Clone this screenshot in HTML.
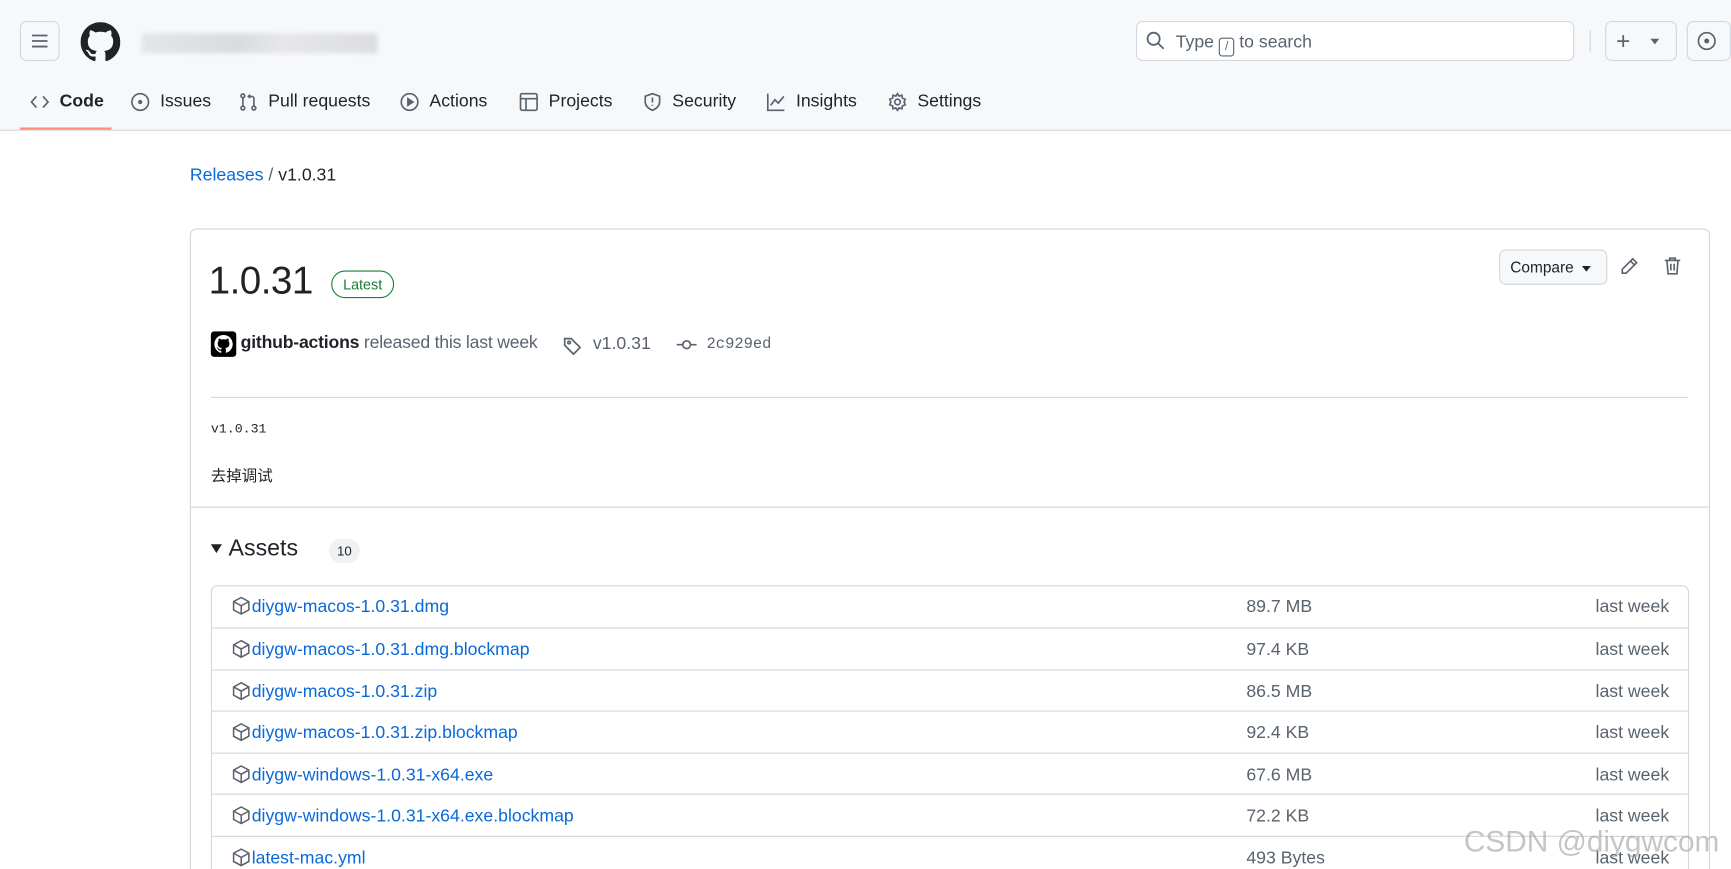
<!DOCTYPE html>
<html><head><meta charset="utf-8"><style>
*{box-sizing:border-box;margin:0;padding:0}
html,body{width:1731px;height:869px;overflow:hidden;background:#fff}
#o{position:relative;width:1731px;height:869px;overflow:hidden}
#w{position:absolute;left:0;top:0;width:1568px;height:784px;overflow:hidden;transform:scale(1.10395,1.10842);transform-origin:0 0;font-family:"Liberation Sans","Noto Sans CJK SC",sans-serif;color:#1f2328}
.a{position:absolute}
.hdr{left:0;top:0;width:1568px;height:118px;background:#f6f8fa;border-bottom:1px solid #d0d7de}
.btn{border:1px solid #d0d7de;border-radius:6px;background:#f6f8fa}
.tab{top:83px;font-size:16px;display:flex;align-items:center;gap:9px;color:#1f2328}
.tab svg{width:18px;height:18px;fill:none;stroke:#59636e;stroke-width:1.5}
.link{color:#0969da}
.row{left:0;width:1338px;height:38px;border-top:1px solid #d0d7de;font-size:16px}
.row .n{position:absolute;left:18px;top:11px;color:#0969da;display:flex;align-items:center}
.row .s{position:absolute;left:937px;top:11px;color:#59636e}
.row .d{position:absolute;right:18px;top:11px;color:#59636e}
.pkg{width:17px;height:17px;fill:none;stroke:#59636e;stroke-width:1.3;margin-right:1px;margin-top:-4px}
</style></head><body><div id="o"><div id="w">
<div class="a hdr"></div>
<div class="a btn" style="left:18px;top:19px;width:36px;height:36px"></div>
<svg class="a" style="left:27px;top:29px" width="18" height="16"><path d="M2 3h14M2 8h14M2 13h14" stroke="#59636e" stroke-width="1.6"/></svg>
<svg class="a" style="left:73px;top:20px" width="36" height="36" viewBox="0 0 16 16"><path fill="#1f2328" d="M8 0C3.58 0 0 3.58 0 8c0 3.54 2.290 6.53 5.47 7.59.4.07.55-.17.55-.38 0-.19-.01-.82-.01-1.49-2.01.37-2.53-.49-2.69-.94-.09-.23-.48-.94-.82-1.13-.28-.15-.68-.52-.01-.53.63-.01 1.08.58 1.23.82.72 1.21 1.87.87 2.33.66.07-.52.28-.87.51-1.07-1.78-.2-3.64-.89-3.64-3.95 0-.87.31-1.59.82-2.15-.08-.2-.36-1.02.08-2.12 0 0 .67-.21 2.2.82.64-.18 1.32-.27 2-.27.68 0 1.36.09 2 .27 1.53-1.04 2.2-.82 2.2-.82.44 1.1.16 1.92.08 2.12.51.56.82 1.27.82 2.15 0 3.07-1.87 3.75-3.65 3.95.29.25.54.73.54 1.48 0 1.07-.01 1.93-.01 2.2 0 .21.15.46.55.38A8.013 8.013 0 0016 8c0-4.42-3.58-8-8-8z"/></svg>
<div class="a" style="left:128px;top:30px;width:214px;height:18px;background:linear-gradient(90deg,#e4e6e9,#d9dbde 40%,#e6e7e9 60%,#dcdde0);filter:blur(2px)"></div>
<div class="a btn" style="left:1029px;top:19px;width:397px;height:36px;background:#fff"></div>
<svg class="a" style="left:1038px;top:28px" width="18" height="18" fill="none" stroke="#59636e" stroke-width="1.6"><circle cx="7" cy="7" r="5.5"/><path d="M11 11l5 5"/></svg>
<div class="a" style="left:1065px;top:30px;font-size:16px;color:#59636e">Type <span style="display:inline-block;border:1px solid #59636e;border-radius:3px;font-size:11px;width:14px;height:17px;text-align:center;line-height:15px;vertical-align:-2px">/</span> to search</div>
<div class="a" style="left:1440px;top:27px;width:1px;height:20px;background:#d0d7de"></div>
<div class="a btn" style="left:1454px;top:19px;width:65px;height:36px"></div>
<div class="a" style="left:1464px;top:24px;font-size:22px;color:#59636e">+</div>
<div class="a" style="left:1495px;top:35px;border:4px solid transparent;border-top:5px solid #59636e"></div>
<div class="a btn" style="left:1528px;top:19px;width:40px;height:36px"></div>
<svg class="a" style="left:1537px;top:28px" width="18" height="18" fill="none" stroke="#59636e" stroke-width="1.5"><circle cx="9" cy="9" r="7.5"/><circle cx="9" cy="9" r="1.5" fill="#59636e"/></svg>

<div class="a tab" style="left:27px"><svg viewBox="0 0 18 18"><path d="M6 4L1.5 9 6 14M12 4l4.5 5L12 14"/></svg><b style="font-weight:600">Code</b></div>
<div class="a" style="left:18px;top:115px;width:83px;height:2px;background:#fd8c73"></div>
<div class="a tab" style="left:118px"><svg viewBox="0 0 18 18"><circle cx="9" cy="9" r="7.5"/><circle cx="9" cy="9" r="1.2" fill="#59636e"/></svg>Issues</div>
<div class="a tab" style="left:216px"><svg viewBox="0 0 18 18"><circle cx="4" cy="3.5" r="1.7"/><circle cx="4" cy="14.5" r="1.7"/><circle cx="14" cy="14.5" r="1.7"/><path d="M4 5.2v7.6M14 12.8V6a2 2 0 00-2-2H9M10.5 2.5L9 4l1.5 1.5"/></svg>Pull requests</div>
<div class="a tab" style="left:362px"><svg viewBox="0 0 18 18"><circle cx="9" cy="9" r="7.5"/><path d="M7.5 6v6l4.5-3z" fill="#59636e"/></svg>Actions</div>
<div class="a tab" style="left:470px"><svg viewBox="0 0 18 18"><rect x="1.5" y="1.5" width="15" height="15" rx="1.5"/><path d="M1.5 6h15M6.5 6v10.5"/></svg>Projects</div>
<div class="a tab" style="left:582px"><svg viewBox="0 0 18 18"><path d="M9 1.5l6.5 2.3V9c0 3.5-3 6-6.5 7.5C5.5 15 2.5 12.5 2.5 9V3.8z"/><path d="M9 5v4.5M9 11.5v1"/></svg>Security</div>
<div class="a tab" style="left:694px"><svg viewBox="0 0 18 18"><path d="M1.5 1.5v15h15M4 12l4-5 3 3 5-6"/></svg>Insights</div>
<div class="a tab" style="left:804px"><svg viewBox="0 0 18 18"><circle cx="9" cy="9" r="2.5"/><path d="M9 1.5l1.5 2.2 2.5-.8.5 2.6 2.5 1-1 2.5 1 2.5-2.5 1-.5 2.6-2.5-.8L9 16.5l-1.5-2.2-2.5.8-.5-2.6-2.5-1 1-2.5-1-2.5 2.5-1 .5-2.6 2.5.8z"/></svg>Settings</div>

<div class="a" style="left:172px;top:150px;font-size:16px"><span class="link">Releases</span> <span style="color:#59636e">/</span> v1.0.31</div>

<div class="a" style="left:172px;top:206px;width:1377px;height:800px;border:1px solid #d0d7de;border-radius:6px"></div>
<div class="a" style="left:189px;top:234px;font-size:35px;font-weight:500;letter-spacing:-0.5px">1.0.31</div>
<div class="a" style="left:300px;top:244px;width:57px;height:25px;border:1px solid #1a7f37;border-radius:13px;color:#1a7f37;font-size:13px;text-align:center;line-height:23px">Latest</div>
<div class="a btn" style="left:1358px;top:225px;width:98px;height:32px"></div>
<div class="a" style="left:1368px;top:233px;font-size:14px">Compare</div>
<div class="a" style="left:1433px;top:240px;border:4px solid transparent;border-top:5px solid #1f2328"></div>
<svg class="a" style="left:1467px;top:231px" width="18" height="18" fill="none" stroke="#59636e" stroke-width="1.5"><path d="M12 2.5l3.5 3.5L6 15.5H2.5V12z M10 4.5l3.5 3.5"/></svg>
<svg class="a" style="left:1506px;top:231px" width="18" height="18" fill="none" stroke="#59636e" stroke-width="1.5"><path d="M2 4h14M6.5 4V2h5v2M4 4l1 12h8l1-12M7.5 7v6M10.5 7v6"/></svg>

<div class="a" style="left:191px;top:299px;width:23px;height:23px;background:#000;border-radius:3px"></div>
<svg class="a" style="left:193px;top:301px" width="19" height="19" viewBox="0 0 16 16"><path fill="#fff" d="M8 1C4.1 1 1 4.1 1 8c0 3.1 2 5.7 4.8 6.6.35.06.48-.15.48-.33v-1.3c-1.95.42-2.36-.94-2.36-.94-.32-.81-.78-1.03-.78-1.03-.64-.43.05-.42.05-.42.7.05 1.07.72 1.07.72.63 1.07 1.64.76 2.04.58.06-.45.24-.76.45-.94-1.56-.18-3.2-.78-3.2-3.46 0-.77.27-1.39.72-1.88-.07-.18-.31-.89.07-1.86 0 0 .59-.19 1.93.72a6.6 6.6 0 013.5 0c1.34-.91 1.93-.72 1.93-.72.38.97.14 1.68.07 1.86.45.49.72 1.11.72 1.88 0 2.69-1.64 3.28-3.2 3.45.25.22.48.65.48 1.3v1.93c0 .19.13.4.48.33C13 13.7 15 11.1 15 8c0-3.9-3.1-7-7-7z"/></svg>
<div class="a" style="left:218px;top:301px;font-size:16px;color:#59636e;letter-spacing:-0.2px"><b style="color:#1f2328;font-weight:600">github-actions</b> released this last week</div>
<svg class="a" style="left:510px;top:303px" width="18" height="18" fill="none" stroke="#59636e" stroke-width="1.5"><path d="M1.5 2.5v6l8 8 6-6-8-8z"/><circle cx="5.5" cy="6" r="1.2"/></svg>
<div class="a" style="left:537px;top:302px;font-size:16px;color:#59636e">v1.0.31</div>
<svg class="a" style="left:612px;top:302px" width="20" height="18" fill="none" stroke="#59636e" stroke-width="1.5"><circle cx="10" cy="9" r="3.5"/><path d="M1 9h5.5M13.5 9H19"/></svg>
<div class="a" style="left:640px;top:303px;font-size:14px;color:#59636e;font-family:'Liberation Mono',monospace">2c929ed</div>
<div class="a" style="left:191px;top:358px;width:1338px;height:1px;background:#d0d7de"></div>
<div class="a" style="left:191px;top:380px;font-size:12px;font-family:'Liberation Mono',monospace;color:#1f2328">v1.0.31</div>
<div class="a" style="left:191px;top:419px;font-size:14px">去掉调试</div>
<div class="a" style="left:173px;top:457px;width:1375px;height:1px;background:#d0d7de"></div>
<div class="a" style="left:191px;top:491px;border:5px solid transparent;border-top:8px solid #1f2328;border-bottom:0"></div>
<div class="a" style="left:207px;top:483px;font-size:21px;font-weight:500">Assets</div>
<div class="a" style="left:298px;top:486px;width:28px;height:22px;border-radius:11px;background:#eff2f5;font-size:12px;text-align:center;line-height:22px">10</div>

<div class="a" style="left:191px;top:528px;width:1339px;height:500px;border:1px solid #d0d7de;border-radius:6px;overflow:hidden">
<div class="a row" style="top:-1px;border-top:0"><div class="n"><svg class="pkg" viewBox="0 0 16 16"><path d="M8 1l6.5 3.5v7L8 15l-6.5-3.5v-7zM1.5 4.5L8 8l6.5-3.5M8 8v7"/></svg>diygw-macos-1.0.31.dmg</div><div class="s">89.7 MB</div><div class="d">last week</div></div>
<div class="a row" style="top:37px"><div class="n"><svg class="pkg" viewBox="0 0 16 16"><path d="M8 1l6.5 3.5v7L8 15l-6.5-3.5v-7zM1.5 4.5L8 8l6.5-3.5M8 8v7"/></svg>diygw-macos-1.0.31.dmg.blockmap</div><div class="s">97.4 KB</div><div class="d">last week</div></div>
<div class="a row" style="top:75px"><div class="n"><svg class="pkg" viewBox="0 0 16 16"><path d="M8 1l6.5 3.5v7L8 15l-6.5-3.5v-7zM1.5 4.5L8 8l6.5-3.5M8 8v7"/></svg>diygw-macos-1.0.31.zip</div><div class="s">86.5 MB</div><div class="d">last week</div></div>
<div class="a row" style="top:112px"><div class="n"><svg class="pkg" viewBox="0 0 16 16"><path d="M8 1l6.5 3.5v7L8 15l-6.5-3.5v-7zM1.5 4.5L8 8l6.5-3.5M8 8v7"/></svg>diygw-macos-1.0.31.zip.blockmap</div><div class="s">92.4 KB</div><div class="d">last week</div></div>
<div class="a row" style="top:150px"><div class="n"><svg class="pkg" viewBox="0 0 16 16"><path d="M8 1l6.5 3.5v7L8 15l-6.5-3.5v-7zM1.5 4.5L8 8l6.5-3.5M8 8v7"/></svg>diygw-windows-1.0.31-x64.exe</div><div class="s">67.6 MB</div><div class="d">last week</div></div>
<div class="a row" style="top:187px"><div class="n"><svg class="pkg" viewBox="0 0 16 16"><path d="M8 1l6.5 3.5v7L8 15l-6.5-3.5v-7zM1.5 4.5L8 8l6.5-3.5M8 8v7"/></svg>diygw-windows-1.0.31-x64.exe.blockmap</div><div class="s">72.2 KB</div><div class="d">last week</div></div>
<div class="a row" style="top:225px"><div class="n"><svg class="pkg" viewBox="0 0 16 16"><path d="M8 1l6.5 3.5v7L8 15l-6.5-3.5v-7zM1.5 4.5L8 8l6.5-3.5M8 8v7"/></svg>latest-mac.yml</div><div class="s">493 Bytes</div><div class="d">last week</div></div>
</div>
<div class="a" style="left:1326px;top:744px;font-size:27px;color:rgba(150,150,150,.55);white-space:nowrap">CSDN @diygwcom</div>
</div></div></body></html>
